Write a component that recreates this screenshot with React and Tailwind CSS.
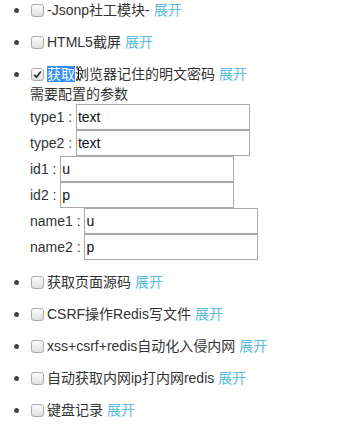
import React from "react";

const font = { fontFamily: '"Liberation Sans", "Noto Sans CJK SC", sans-serif' };

function Box({ checked }) {
  return (
    <span className="inline-flex items-center justify-center w-[13px] h-[13px] border border-[#acacac] rounded-[3px] bg-gradient-to-b from-[#fdfdfd] to-[#dedede] mr-[3px] shrink-0">
      {checked && (
        <svg width="9" height="9" viewBox="0 0 9 9">
          <path d="M1.2 4.8 L3.5 7.2 L7.8 1.5" fill="none" stroke="#333" strokeWidth="1.7" />
        </svg>
      )}
    </span>
  );
}

function Link() {
  return <span className="text-[#5bbbdc] ml-[4px]">展开</span>;
}

function Item({ children, checked, extra }) {
  return (
    <li className="flex mb-[12px]">
      <div className="w-[31px] h-[20px] flex items-center shrink-0 pl-[14px]">
        <span className="w-[5px] h-[5px] rounded-full bg-[#444]" />
      </div>
      <div>
        <div className="flex items-center h-[20px]">
          <Box checked={checked} />
          {children}
          <Link />
        </div>
        {extra}
      </div>
    </li>
  );
}

function Field({ label, value }) {
  return (
    <div className="flex items-center h-[26px]">
      <span>{label} :&nbsp;</span>
      <div className="w-[174px] h-[26px] border border-[#a9a9a9] bg-white px-[1px] flex items-center text-[#111]">
        {value}
      </div>
    </div>
  );
}

export default function App() {
  return (
    <div className="w-[345px] h-[433px] bg-white overflow-hidden text-[14px] text-[#333]" style={font}>
      <ul className="list-none p-0 m-0">
        <Item>-Jsonp社工模块-</Item>
        <Item>HTML5截屏</Item>
        <Item
          checked
          extra={
            <div className="-ml-[1px]">
              <div className="h-[20px] leading-[20px]">需要配置的参数</div>
              <Field label="type1" value="text" />
              <Field label="type2" value="text" />
              <Field label="id1" value="u" />
              <Field label="id2" value="p" />
              <Field label="name1" value="u" />
              <Field label="name2" value="p" />
            </div>
          }
        >
          <span className="relative">
            <span className="bg-[#3390ff] text-white">获取</span>
            <svg className="absolute left-[28px] top-[2px]" width="7" height="15" viewBox="0 0 7 15">
              <path d="M1 1 H3 M4 1 H6 M3.5 1.5 V13.5 M1 14 H3 M4 14 H6" fill="none" stroke="#000" strokeWidth="1" />
            </svg>
            浏览器记住的明文密码
          </span>
        </Item>
        <Item>获取页面源码</Item>
        <Item>CSRF操作Redis写文件</Item>
        <Item>xss+csrf+redis自动化入侵内网</Item>
        <Item>自动获取内网ip打内网redis</Item>
        <Item>键盘记录</Item>
      </ul>
    </div>
  );
}
